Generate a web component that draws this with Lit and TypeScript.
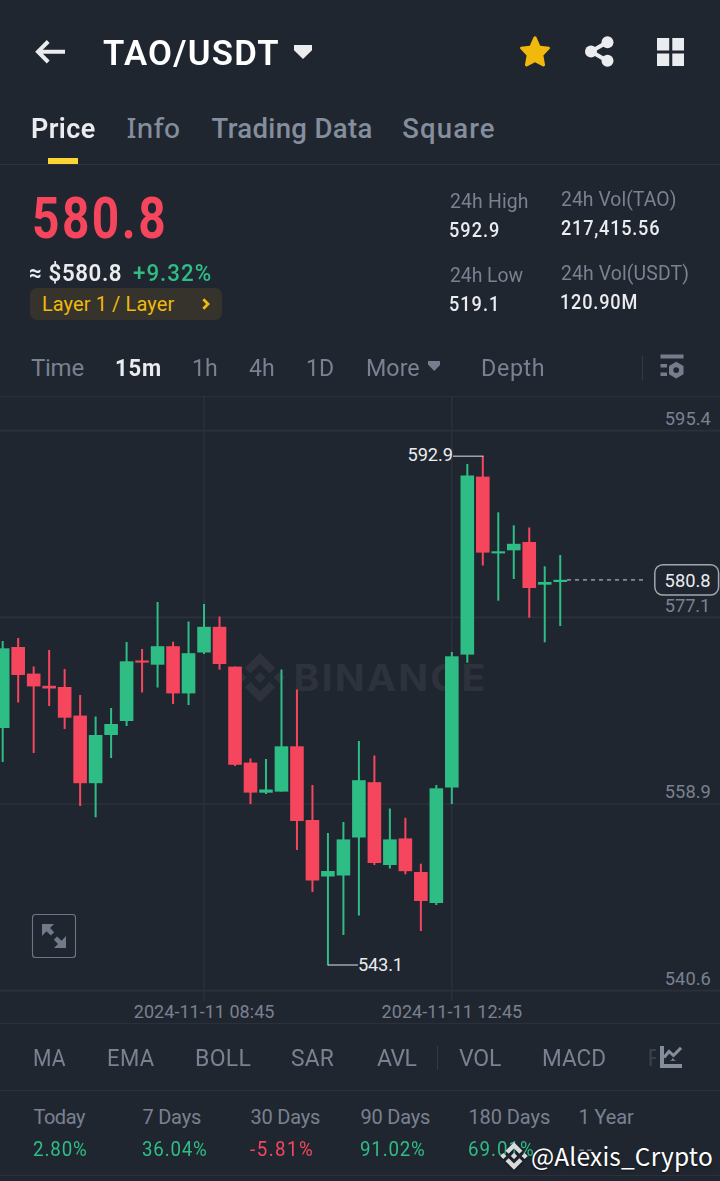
import { LitElement, html, svg, css } from "lit";
import { customElement, property } from "lit/decorators.js";
import { styleMap } from "lit/directives/style-map.js";

const pen = document.createElement("canvas").getContext("2d")!;

/** A single line of text whose visible glyphs span exactly `span` pixels. */
@customElement("ink-text")
class InkText extends LitElement {
  @property() text = "";
  @property({ type: Number }) span = 50;
  @property({ type: Number }) size = 20;
  @property({ type: Number }) weight = 400;
  @property({ type: Number }) line = 24;
  @property({ type: Number }) squeeze = 1;
  @property() family = "Roboto";

  static styles = css`
    :host {
      display: block;
      flex: none;
      white-space: pre;
    }
    .box {
      display: block;
    }
    .glyphs {
      display: inline-block;
      transform-origin: 0 50%;
    }
  `;

  render() {
    pen.font = `${this.weight} ${this.size}px "${this.family}", sans-serif`;
    const m = pen.measureText(this.text);
    const ink = m.actualBoundingBoxLeft + m.actualBoundingBoxRight;
    const gaps = Math.max(1, this.text.length - 1);
    const spacing = ((this.span + 0.5) / this.squeeze - ink) / gaps;
    return html`<span
      class="box"
      style=${styleMap({
        width: `${this.span}px`,
        height: `${this.line}px`,
        lineHeight: `${this.line}px`,
        fontFamily: `"${this.family}", sans-serif`,
        fontSize: `${this.size}px`,
        fontWeight: `${this.weight}`,
      })}
      ><span
        class="glyphs"
        style=${styleMap({
          letterSpacing: `${spacing}px`,
          marginLeft: `${m.actualBoundingBoxLeft * this.squeeze - 0.1}px`,
          transform: this.squeeze === 1 ? "none" : `scaleX(${this.squeeze})`,
        })}
        >${this.text}</span
      ></span
    >`;
  }
}

// direction, wick top, body top, body bottom, wick bottom
type Candle = ["g" | "r", number, number, number, number];
const CANDLES: Candle[] = [
  ["g", 641, 648.3, 728, 762],
  ["r", 638, 647, 675, 702.5],
  ["r", 666.5, 673.6, 686.4, 753],
  ["r", 650, 685.8, 688.5, 706],
  ["r", 669, 687, 717.7, 729],
  ["r", 695, 715.6, 783.2, 806],
  ["g", 716.5, 735, 783.2, 817.3],
  ["g", 708, 724, 735, 758],
  ["g", 642, 661.3, 721, 726],
  ["r", 649, 660.5, 662.6, 692.5],
  ["g", 602, 646.2, 664.7, 687.5],
  ["r", 641.7, 646.2, 693.4, 704],
  ["g", 621.5, 653.2, 693.4, 705],
  ["g", 604, 626.8, 652.5, 654],
  ["r", 616.5, 626.8, 664, 669.7],
  ["r", 666.6, 666.6, 764.8, 766],
  ["r", 758.5, 762.6, 792.6, 804],
  ["g", 759, 789.5, 792.7, 794],
  ["g", 669.5, 746.3, 791.6, 791.6],
  ["r", 689.5, 746.3, 821, 850],
  ["r", 785, 820, 880.5, 892],
  ["g", 833, 871, 876.5, 965.5],
  ["g", 822, 839.4, 875.5, 935],
  ["g", 741, 780.2, 837.5, 915.5],
  ["r", 755.5, 782.2, 863, 865],
  ["g", 808.5, 839.4, 865, 868.5],
  ["r", 817.8, 838.4, 871.2, 874.3],
  ["r", 863.7, 872, 901, 931],
  ["g", 785, 788.3, 903, 905],
  ["g", 652, 656.3, 787.5, 804],
  ["g", 464, 475.5, 654.6, 662.7],
  ["r", 456, 476.6, 552.6, 565.5],
  ["g", 512.3, 551.3, 553.4, 600.7],
  ["g", 525.3, 543.8, 550.3, 579],
  ["r", 527.5, 542, 588, 617.7],
  ["g", 566.3, 582, 584.7, 642.3],
  ["g", 555, 579.8, 582, 626],
];
const PITCH = 15.487;
const FIRST_X = 2.7;

const emblem = (cls: string, box: string) => html`
  <svg class=${cls} viewBox=${box} fill="currentColor">
    <path
      d="M38.73 53.2 62.98 28.95 87.24 53.21 101.35 39.1 62.98.73 24.62 39.09ZM.73 63.31 14.84 49.2 28.95 63.31 14.84 77.42ZM38.73 73.41 62.98 97.67 87.24 73.4 101.36 87.5 62.98 125.89 24.62 87.53ZM97.01 63.31 111.12 49.2 125.23 63.31 111.12 77.42ZM77.3 63.3 62.98 48.98 48.66 63.3 62.98 77.63Z"
    />
  </svg>
`;

@customElement("price-chart")
class PriceChart extends LitElement {
  static styles = css`
    :host {
      display: block;
      width: 720px;
      height: 626px;
    }
    svg {
      display: block;
    }
    text {
      font-family: Roboto, sans-serif;
      font-size: 18.3px;
      fill: #7a8190;
    }
    .grid {
      stroke: #2b303b;
      stroke-width: 1.6;
    }
    .mark {
      fill: #2d323c;
    }
    .brand {
      font-family: Inter, sans-serif;
      font-weight: 700;
      font-size: 36.5px;
      letter-spacing: 2px;
      fill: #2d323c;
    }
    .g {
      fill: #2ebd85;
    }
    .r {
      fill: #f6465d;
    }
    .bright {
      fill: #eaecef;
    }
    .leader {
      stroke: #b5b8be;
      stroke-width: 1.3;
    }
    .last {
      stroke: #858a94;
      stroke-width: 1.8;
      stroke-dasharray: 4 4;
    }
    .pill {
      fill: #202630;
      stroke: #a2a6ad;
      stroke-width: 1.5;
    }
    .now {
      font-weight: 450;
      fill: #eaecef;
    }
    .date {
      font-size: 18px;
    }
    .frame {
      fill: none;
      stroke: #6d7686;
      stroke-width: 1.1;
    }
    .arrows {
      fill: #707a8a;
    }
  `;

  label(cls: string, x: number, centre: number, width: number, value: string) {
    return svg`<text class=${cls} x=${x} y=${centre + 6.3} textLength=${width}>${value}</text>`;
  }

  render() {
    return html`<svg width="720" height="626" viewBox="0 397 720 626">
      ${[430.6, 617.4, 804, 990.6].map(
        (y) => svg`<line class="grid" x1="0" x2="720" y1=${y} y2=${y} />`
      )}
      ${[204, 451.8].map((x) => svg`<line class="grid" x1=${x} x2=${x} y1="397" y2="1001" />`)}
      <g transform="translate(235 652.5) scale(.3968)">
        <path
          class="mark"
          d="M38.73 53.2 62.98 28.95 87.24 53.21 101.35 39.1 62.98.73 24.62 39.09ZM.73 63.31 14.84 49.2 28.95 63.31 14.84 77.42ZM38.73 73.41 62.98 97.67 87.24 73.4 101.36 87.5 62.98 125.89 24.62 87.53ZM97.01 63.31 111.12 49.2 125.23 63.31 111.12 77.42ZM77.3 63.3 62.98 48.98 48.66 63.3 62.98 77.63Z"
        />
      </g>
      <text class="brand" x="293.5" y="691.2" textLength="194" lengthAdjust="spacingAndGlyphs">BINANCE</text>
      ${CANDLES.map(([kind, wickTop, top, bottom, wickBottom], i) => {
        const x = FIRST_X + i * PITCH;
        return svg`
          <rect class=${kind} x=${x - 1} y=${wickTop} width="2" height=${wickBottom - wickTop} />
          <rect class=${kind} x=${x - 6.8} y=${top} width="13.6" height=${bottom - top} />`;
      })}
      <line class="leader" x1="453" x2="483.5" y1="456.2" y2="456.2" />
      <line class="leader" x1="328" x2="358" y1="965" y2="965" />
      <line class="last" x1="567" x2="643.5" y1="579.8" y2="579.8" />
      ${this.label("bright", 407.5, 454.6, 45.5, "592.9")}
      ${this.label("bright", 358, 964.6, 45, "543.1")}
      ${this.label("axis", 664.8, 418.6, 46, "595.4")}
      ${this.label("axis", 664.8, 605.6, 45.5, "577.1")}
      ${this.label("axis", 664.8, 791.8, 46, "558.9")}
      ${this.label("axis", 664.8, 978.8, 46, "540.6")}
      <rect class="pill" x="654.8" y="564.7" width="63.8" height="30.4" rx="8" />
      ${this.label("now", 664.6, 580.2, 46, "580.8")}
      ${this.label("date", 133.8, 1011.5, 140.6, "2024-11-11 08:45")}
      ${this.label("date", 381.6, 1011.5, 140.6, "2024-11-11 12:45")}
      <rect class="frame" x="32.5" y="914.5" width="43" height="43" rx="3" />
      <path
        class="arrows"
        d="M42 924h12l-4 4 4.200 4.200-3.300 3.300-4.400-4.200-4.500 4.700zM66 948h-12l4-4-4.200-4.200 3.300-3.300 4.400 4.200 4.500-4.700z"
      />
    </svg>`;
  }
}

@customElement("app-root")
class AppRoot extends LitElement {
  static styles = css`
    :host {
      display: block;
    }
    * {
      box-sizing: border-box;
    }
    svg {
      display: block;
      flex: none;
    }
    .screen {
      position: relative;
      display: flex;
      flex-direction: column;
      width: 720px;
      height: 1181px;
      overflow: hidden;
      background: #202630;
      color: #7a8190;
      font-family: Roboto, sans-serif;
    }
    .header {
      display: flex;
      align-items: center;
      height: 104px;
      padding: 0 35px;
      color: #eaecef;
    }
    .title {
      margin: 2px 16px 0 38px;
      color: #fff;
    }
    .star {
      margin: -1px 0 0 auto;
      color: #f0b90b;
    }
    .share {
      margin: -1px 0 0 35px;
    }
    .apps {
      margin: -1px 1px 0 42.5px;
    }
    .tabs {
      display: flex;
      align-items: baseline;
      gap: 32.3px;
      height: 61px;
      padding: 12px 33px 0 32.5px;
      border-bottom: 1.5px solid #2d323d;
      color: #848e9c;
    }
    .tab {
      display: flex;
      flex-direction: column;
      align-items: center;
    }
    .tab.on {
      color: #eaecef;
    }
    .bar {
      width: 30px;
      height: 6px;
      margin: 17px 2.5px 0 0;
      background: #fcd535;
    }
    .summary {
      display: flex;
      height: 173px;
    }
    .quote {
      width: 450px;
      padding: 24px 0 0 30px;
    }
    .price {
      padding-left: 3.5px;
      color: #f6465d;
    }
    .sub {
      display: flex;
      gap: 12px;
      padding: 12px 0 0 0.5px;
      color: #eaecef;
    }
    .up {
      color: #2ebd85;
    }
    .down {
      color: #f6465d;
    }
    .tag {
      display: flex;
      align-items: center;
      justify-content: space-between;
      width: 192px;
      height: 32px;
      margin-top: 3px;
      padding: 0 12px 0 13px;
      border-radius: 7px;
      background: #35332c;
      color: #f0b90b;
    }
    .stats {
      display: flex;
      flex-direction: column;
      padding-top: 24px;
    }
    .stats.left {
      width: 111px;
    }
    .stats.right {
      padding-top: 22px;
    }
    .value {
      color: #eaecef;
      padding: 6px 0 20px;
    }
    .intervals {
      display: flex;
      align-items: center;
      height: 59px;
      padding: 1px 36px 0 31px;
      border-bottom: 1.5px solid #2b303b;
    }
    .on {
      color: #eaecef;
    }
    .divider {
      width: 1.5px;
      height: 24px;
      background: #343a46;
    }
    .indicators {
      position: relative;
      display: flex;
      align-items: center;
      height: 68px;
      padding: 2px 0 0 33.5px;
      border-top: 1.5px solid #2b303b;
      border-bottom: 1.5px solid #2b303b;
    }
    .fade {
      width: 7px;
      overflow: hidden;
      opacity: 0.28;
    }
    .periods {
      display: flex;
      height: 85px;
      padding: 14px 0 0 33px;
      border-bottom: 1.5px solid #2b303b;
    }
    .period {
      flex: none;
      display: flex;
      flex-direction: column;
      gap: 9px;
    }
    .credit {
      position: absolute;
      left: 500px;
      top: 1139px;
      display: flex;
      align-items: center;
      gap: 4px;
      color: #fff;
      text-shadow: 0 1px 2px rgba(0, 0, 0, 0.6);
    }
    .emblem {
      width: 28px;
      height: 28px;
      color: #d9dadc;
      filter: drop-shadow(0 1px 1px rgba(0, 0, 0, 0.5));
    }
    .i-15m { margin-left: 33px; }
    .i-1h { margin-left: 34px; }
    .i-4h { margin-left: 33px; }
    .i-1d { margin-left: 35px; }
    .i-more { margin-left: 34px; }
    .i-caret { margin: -4px 0 0 9px; }
    .i-depth { margin-left: 42px; }
    .i-div { margin-left: auto; }
    .i-set { margin: -2px 0 0 17px; }
    .n-ema { margin-left: 43px; }
    .n-boll { margin-left: 42px; }
    .n-sar { margin-left: 41px; }
    .n-avl { margin-left: 43px; }
    .n-div { margin-left: 20px; }
    .n-vol { margin-left: 21.5px; }
    .n-macd { margin-left: 42px; }
    .n-more { margin-left: 43px; }
    .n-icon { margin: -3px 0 0 4.5px; }
    .c0 { width: 109px; }
    .c1 { width: 108px; }
    .c2 { width: 110px; }
    .c3 { width: 109px; }
    .c4 { width: 110px; }
    .push { margin-left: 0.5px; }
  `;

  stat(name: string, nameSpan: number, value: string, valueSpan: number) {
    return html`<ink-text text=${name} span=${nameSpan} size="20" squeeze="0.97"></ink-text>
      <ink-text class="value" text=${value} span=${valueSpan} size="19.3" weight="500" squeeze="0.94"></ink-text>`;
  }

  period(i: number, name: string, nameSpan: number, value: string, span: number, tone: string) {
    return html`<div class="period c${i}">
      <ink-text class="push" text=${name} span=${nameSpan} size="20"></ink-text>
      <ink-text class=${tone} text=${value} span=${span} size="19.5" squeeze="0.96"></ink-text>
    </div>`;
  }

  render() {
    return html`<div class="screen">
      <div class="header">
        <svg width="30" height="24" viewBox="0 0 30 24" fill="none" stroke="currentColor" stroke-width="4">
          <path d="M30 11.700H3M13.200 1.500 3 11.700 13.200 22" />
        </svg>
        <ink-text class="title" text="TAO/USDT" span="175" size="35.8" weight="600" line="44" squeeze="0.97"></ink-text>
        <svg width="18" height="14" viewBox="0 0 18 14" fill="currentColor">
          <path d="M0 0h18v5.300L9 14 0 5.300z" />
        </svg>
        <svg class="star" width="30" height="31" viewBox="0 0 30 31" fill="currentColor">
          <path
            d="M13.600 1.100Q15-.6 16.400 1.100L20.200 9.700 29 10.700Q30.700 11.500 29.500 13.100L23.400 19.600 25.100 29Q24.700 31 22.600 30.300L15 26.300 7.400 30.300Q5.300 31 4.900 29L6.600 19.600.5 13.100Q-.7 11.500 1 10.700L9.800 9.700Z"
          />
        </svg>
        <svg class="share" width="29" height="31" viewBox="0 0 29 31" fill="currentColor">
          <path d="M6 15.500 22.500 6M6 15.500 22.500 25" stroke="currentColor" stroke-width="4" />
          <circle cx="6" cy="15.500" r="6" />
          <circle cx="22.500" cy="6.200" r="6" />
          <circle cx="22.500" cy="24.800" r="6" />
        </svg>
        <svg class="apps" width="27.500" height="28" viewBox="0 0 27.500 28" fill="currentColor">
          <path d="M0 0h12.200v12.500H0zM15.300 0h12.200v12.500H15.300zM0 15.500h12.200V28H0zM15.300 15.500h12.200V28H15.300z" />
        </svg>
      </div>

      <div class="tabs">
        <div class="tab on">
          <ink-text text="Price" span="63" size="27.500" weight="600" squeeze="0.98"></ink-text>
          <div class="bar"></div>
        </div>
        <ink-text text="Info" span="51.500" size="27" weight="500" family="Noto Sans"></ink-text>
        <ink-text text="Trading Data" span="159.500" size="27.500" weight="500"></ink-text>
        <ink-text text="Square" span="90" size="27.500" weight="500"></ink-text>
      </div>

      <div class="summary">
        <div class="quote">
          <ink-text class="price" text="580.8" span="130" size="57" weight="700" line="60" squeeze="0.84"></ink-text>
          <div class="sub">
            <ink-text text="≈ $580.8" span="90.500" size="24" weight="600" squeeze="0.93"></ink-text>
            <ink-text class="up" text="+9.32%" span="77" size="24" weight="500" squeeze="0.93"></ink-text>
          </div>
          <div class="tag">
            <ink-text text="Layer 1 / Layer" span="131" size="20"></ink-text>
            <svg width="8" height="12" viewBox="0 0 8 12" fill="none" stroke="currentColor" stroke-width="2.800">
              <path d="M1.300 1.300 6 6 1.300 10.700" />
            </svg>
          </div>
        </div>
        <div class="stats left">
          ${this.stat("24h High", 77, "592.9", 48)} ${this.stat("24h Low", 72.5, "519.1", 46)}
        </div>
        <div class="stats right">
          ${this.stat("24h Vol(TAO)", 114, "217,415.56", 98)}
          ${this.stat("24h Vol(USDT)", 126.5, "120.90M", 75)}
        </div>
      </div>

      <div class="intervals">
        <ink-text text="Time" span="52" size="24"></ink-text>
        <ink-text class="i-15m on" text="15m" span="44" size="24" weight="700" squeeze="0.92"></ink-text>
        <ink-text class="i-1h" text="1h" span="22" size="24" squeeze="0.96"></ink-text>
        <ink-text class="i-4h" text="4h" span="24" size="24" squeeze="0.96"></ink-text>
        <ink-text class="i-1d" text="1D" span="25" size="24" squeeze="0.96"></ink-text>
        <ink-text class="i-more" text="More" span="51.500" size="24" squeeze="0.97"></ink-text>
        <svg class="i-caret" width="12.500" height="10" viewBox="0 0 12.500 10" fill="#767d8c">
          <path d="M0 0h12.500v3.500L6.250 10 0 3.500z" />
        </svg>
        <ink-text class="i-depth" text="Depth" span="61" size="24" squeeze="0.97"></ink-text>
        <div class="divider i-div"></div>
        <svg class="i-set" width="24" height="25" viewBox="0 0 24 25" fill="#767d8c">
          <path d="M.5.500h23v4H.5zM.5 10h6.500v3.500H.5zM.5 18.500h6.500V22H.5z" />
          <path
            fill-rule="evenodd"
            d="M16.200 7.800 23.500 12v8.200l-7.300 4.300L9 20.200V12zM16.200 13.200a2.900 2.900 0 1 0 0 5.800 2.900 2.900 0 0 0 0-5.800z"
          />
        </svg>
      </div>

      <price-chart></price-chart>

      <div class="indicators">
        <ink-text text="MA" span="31.500" size="24" squeeze="0.88"></ink-text>
        <ink-text class="n-ema" text="EMA" span="46" size="24" squeeze="0.92"></ink-text>
        <ink-text class="n-boll" text="BOLL" span="54.500" size="24" squeeze="0.96"></ink-text>
        <ink-text class="n-sar" text="SAR" span="42.500" size="24" squeeze="0.95"></ink-text>
        <ink-text class="n-avl" text="AVL" span="39.500" size="24" squeeze="0.96"></ink-text>
        <div class="divider n-div"></div>
        <ink-text class="n-vol" text="VOL" span="42" size="24" squeeze="0.96"></ink-text>
        <ink-text class="n-macd" text="MACD" span="62" size="24" squeeze="0.94"></ink-text>
        <div class="fade n-more"><ink-text text="R" span="14" size="24"></ink-text></div>
        <svg class="n-icon" width="22" height="22" viewBox="0 0 22 22" fill="#848e9c">
          <path d="M0 0h4v18h18v4H0z" />
          <path d="M4 11.500 9 5.500 13.500 9.500 21 1.800" fill="none" stroke="#848e9c" stroke-width="3" />
          <path d="M9.500 14.800q3.300-.6 3.300-3.500.2 2.900 3.700 3.500z" />
        </svg>
      </div>

      <div class="periods">
        ${this.period(0, "Today", 52, "2.80%", 53, "up")}
        ${this.period(1, "7 Days", 58, "36.04%", 64, "up")}
        ${this.period(2, "30 Days", 69, "-5.81%", 62, "down")}
        ${this.period(3, "90 Days", 69, "91.02%", 64, "up")}
        ${this.period(4, "180 Days", 80, "69.01%", 64, "up")}
        ${this.period(5, "1 Year", 54, "--", 13, "flat")}
      </div>

      <div class="credit">
        ${emblem("emblem", "0 0 126 126.6")}
        <ink-text
          text="@Alexis_Crypto"
          span="179.500"
          size="24.500"
          line="34"
          family="Noto Sans CJK SC"
        ></ink-text>
      </div>
    </div>`;
  }
}
